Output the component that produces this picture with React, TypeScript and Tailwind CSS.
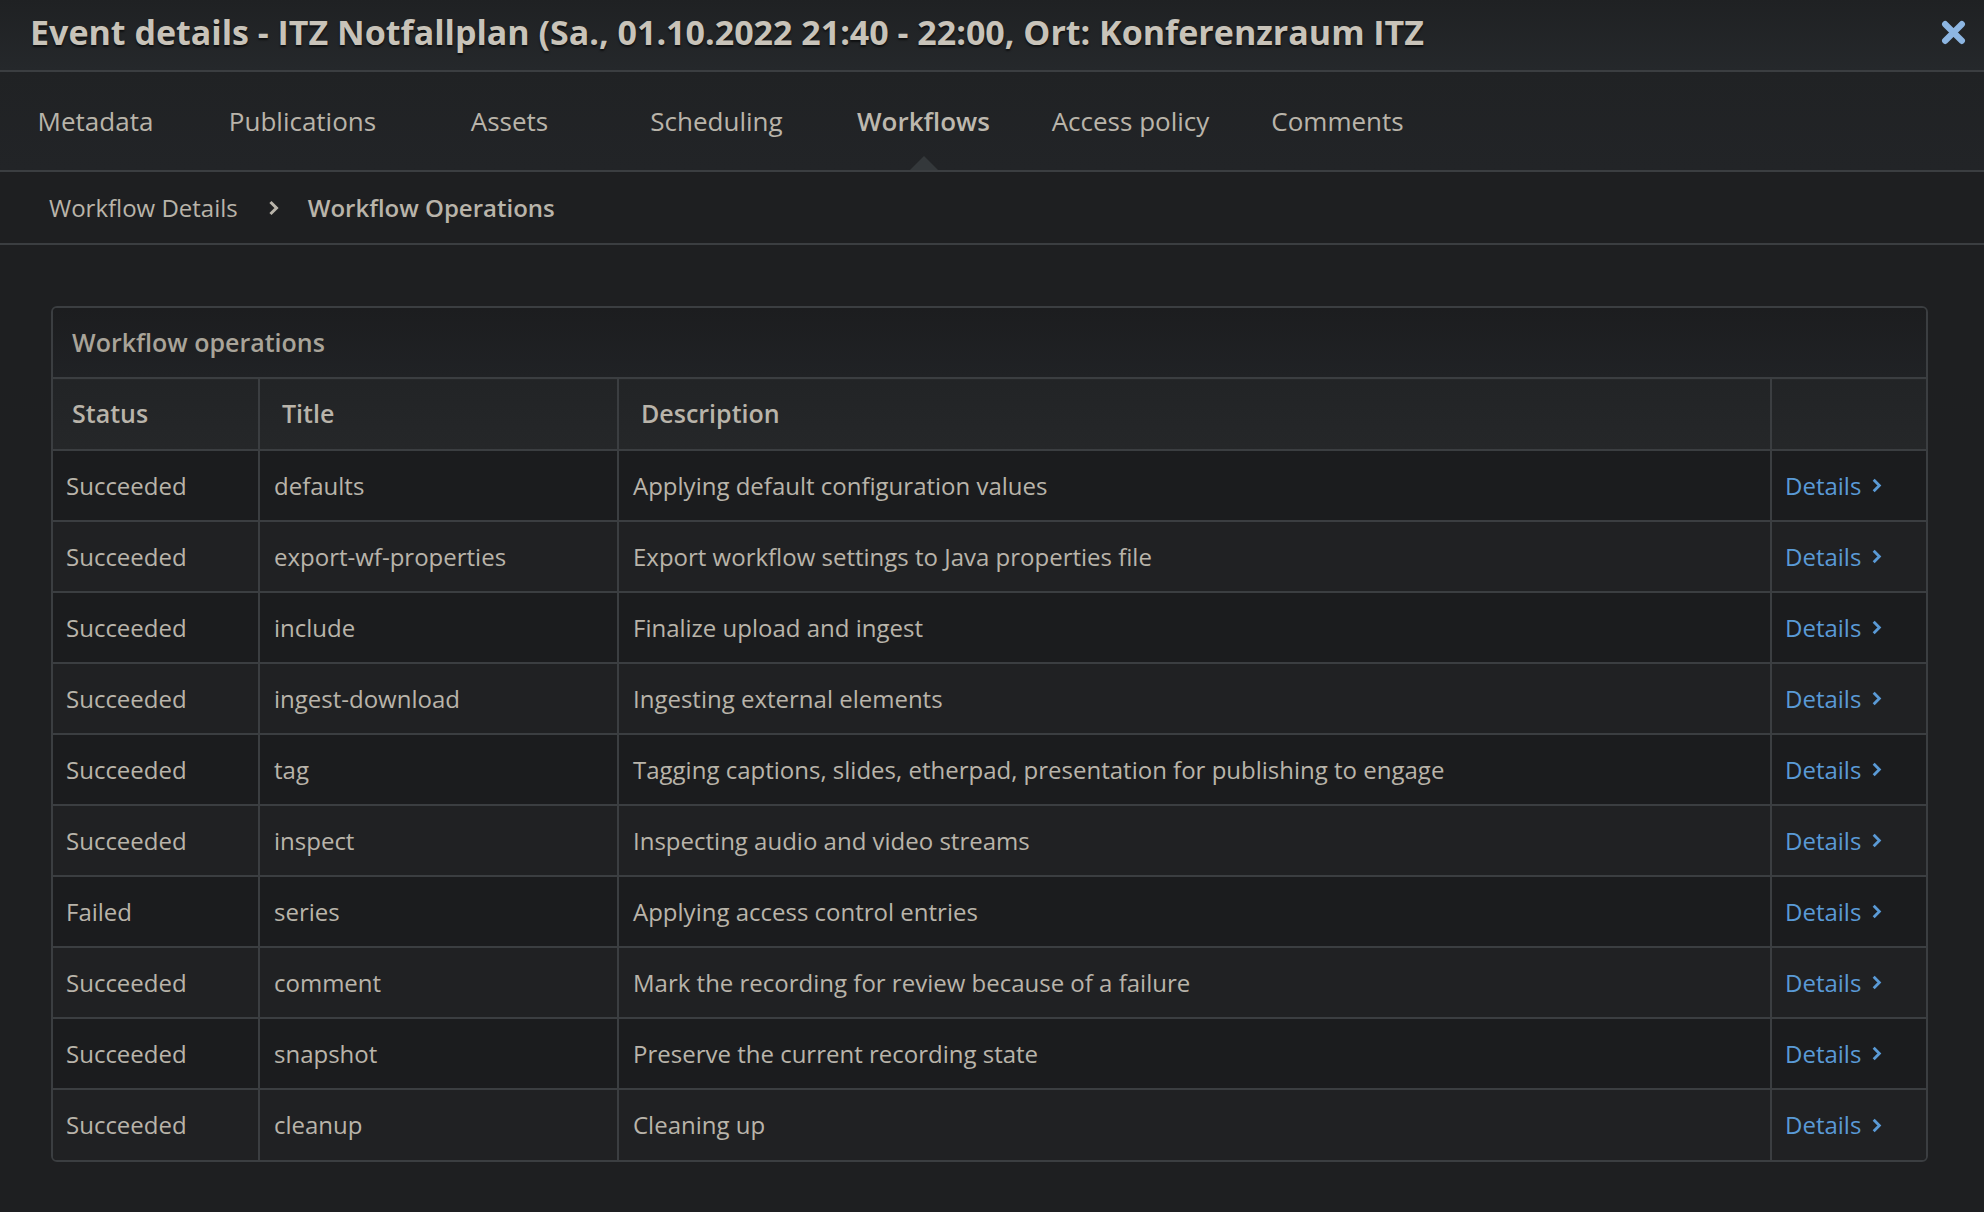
import React from "react";

type Operation = {
  status: string;
  title: string;
  description: string;
};

const operations: Operation[] = [
  { status: "Succeeded", title: "defaults", description: "Applying default configuration values" },
  { status: "Succeeded", title: "export-wf-properties", description: "Export workflow settings to Java properties file" },
  { status: "Succeeded", title: "include", description: "Finalize upload and ingest" },
  { status: "Succeeded", title: "ingest-download", description: "Ingesting external elements" },
  { status: "Succeeded", title: "tag", description: "Tagging captions, slides, etherpad, presentation for publishing to engage" },
  { status: "Succeeded", title: "inspect", description: "Inspecting audio and video streams" },
  { status: "Failed", title: "series", description: "Applying access control entries" },
  { status: "Succeeded", title: "comment", description: "Mark the recording for review because of a failure" },
  { status: "Succeeded", title: "snapshot", description: "Preserve the current recording state" },
  { status: "Succeeded", title: "cleanup", description: "Cleaning up" },
];

const tabs = ["Metadata", "Publications", "Assets", "Scheduling", "Workflows", "Access policy", "Comments"];

function Chevron({ className }: { className?: string }) {
  return (
    <svg viewBox="0 0 10 16" className={className} fill="none" stroke="currentColor" strokeWidth="3" strokeLinecap="square">
      <path d="M2.5 3 L7.5 8 L2.5 13" />
    </svg>
  );
}

export default function App() {
  return (
    <div className="min-h-[1212px] w-full bg-[#1e1f21] font-['Open_Sans',sans-serif] text-[#b9b4aa]">
      {/* modal header */}
      <div className="flex h-[72px] items-center justify-between border-b-2 border-[#3b3e41] bg-gradient-to-b from-[#1f2123] to-[#25282b] pb-[6px] pl-[30px] pr-[16px]">
        <h2 className="text-[34px] font-bold text-[#c8c3b9] [text-shadow:0_2px_2px_rgba(0,0,0,0.6)]">
          Event details - ITZ Notfallplan (Sa., 01.10.2022 21:40 - 22:00, Ort: Konferenzraum ITZ
        </h2>
        <button className="flex h-[30px] w-[30px] items-center justify-center text-[#8db6e2]">
          <svg viewBox="0 0 24 24" className="h-[25px] w-[25px]" fill="none" stroke="currentColor" strokeWidth="6" strokeLinecap="round">
            <path d="M4 4 L20 20 M20 4 L4 20" />
          </svg>
        </button>
      </div>

      {/* tabs */}
      <nav className="flex h-[100px] items-center border-b-2 border-[#3b3e41] bg-gradient-to-b from-[#202224] to-[#222427]">
        <div className="-ml-2 flex h-full">
          {tabs.map((tab) => (
            <div key={tab} className="relative flex h-full w-[207px] items-center justify-center">
              <span
                className={
                  tab === "Workflows"
                    ? "text-[26px] font-semibold text-[#bdb8ae]"
                    : "text-[26px] text-[#b9b4aa]"
                }
              >
                {tab}
              </span>
              {tab === "Workflows" && (
                <span className="absolute bottom-0 left-1/2 h-0 w-0 -translate-x-1/2 border-x-[14px] border-b-[14px] border-x-transparent border-b-[#34383b]" />
              )}
            </div>
          ))}
        </div>
      </nav>

      {/* breadcrumb */}
      <div className="flex h-[73px] items-center border-b-2 border-[#3b3e41] pl-[49px] text-[24px]">
        <span className="text-[#b9b4aa]">Workflow Details</span>
        <Chevron className="ml-[31px] mr-[29px] h-[16px] w-[10px] text-[#b9b4aa]" />
        <span className="font-semibold text-[#b9b4aa]">Workflow Operations</span>
      </div>

      {/* content */}
      <div className="pl-[51px] pr-[56px] pt-[61px]">
        <div className="overflow-hidden rounded-[6px] border-2 border-[#3b3e41]">
          <div className="flex h-[69px] items-center bg-gradient-to-b from-[#1c1d1f] to-[#202225] pl-[19px] text-[25px] font-semibold text-[#a9a499]">
            Workflow operations
          </div>
          <table className="w-full border-collapse text-left">
            <colgroup>
              <col className="w-[206px]" />
              <col className="w-[359px]" />
              <col />
              <col className="w-[155px]" />
            </colgroup>
            <thead>
              <tr className="h-[72px] border-t-2 border-[#3b3e41] bg-gradient-to-b from-[#222426] to-[#252729]">
                <th className="border-r-2 border-[#3b3e41] pl-[19px] text-[25px] font-semibold text-[#b9b4aa]">Status</th>
                <th className="border-r-2 border-[#3b3e41] pl-[22px] text-[25px] font-semibold text-[#b9b4aa]">Title</th>
                <th className="border-r-2 border-[#3b3e41] pl-[22px] text-[25px] font-semibold text-[#b9b4aa]">Description</th>
                <th />
              </tr>
            </thead>
            <tbody>
              {operations.map((op, i) => (
                <tr
                  key={op.title}
                  className={
                    i % 2 === 0
                      ? "h-[71px] border-t-2 border-[#3b3e41] bg-[#1b1c1e]"
                      : "h-[71px] border-t-2 border-[#3b3e41] bg-[#202123]"
                  }
                >
                  <td className="border-r-2 border-[#3b3e41] pl-[13px] text-[24px]">{op.status}</td>
                  <td className="border-r-2 border-[#3b3e41] pl-[14px] text-[24px]">{op.title}</td>
                  <td className="border-r-2 border-[#3b3e41] pl-[14px] text-[24px]">{op.description}</td>
                  <td className="pl-[13px]">
                    <a className="flex items-center gap-[11px] text-[24px] text-[#5a9ad6]">
                      Details
                      <Chevron className="h-[15px] w-[10px]" />
                    </a>
                  </td>
                </tr>
              ))}
            </tbody>
          </table>
        </div>
      </div>
    </div>
  );
}
